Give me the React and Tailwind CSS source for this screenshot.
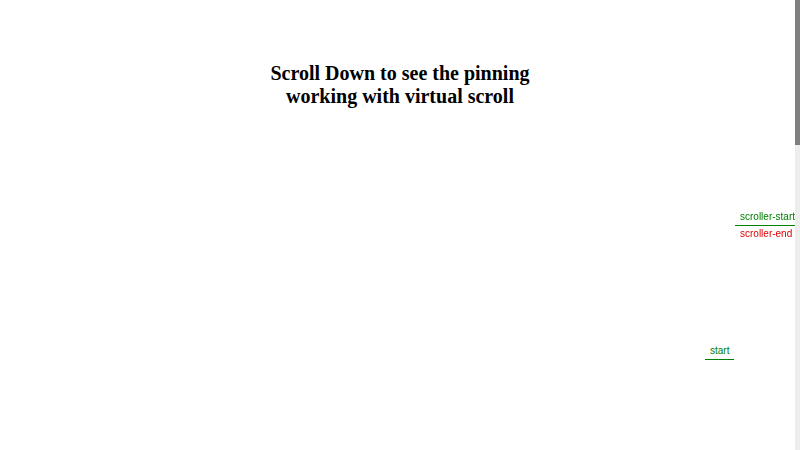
import React from 'react';

function Marker({ label, color, line = true, className = '' }) {
  return (
    <div
      className={`px-[5px] text-[10px] leading-[12px] whitespace-nowrap ${line ? 'border-b pt-[3px] pb-[2px]' : 'pt-[2px] pb-[3px]'} ${className}`}
      style={{ color, borderColor: color, fontFamily: '"Liberation Sans", Arial, sans-serif' }}
    >
      {label}
    </div>
  );
}

export default function App() {
  return (
    <div className="relative h-screen overflow-hidden bg-white">
      <div className="pt-[62px] text-center">
        <h1
          className="text-[20px] leading-[23px] font-bold text-black"
          style={{ fontFamily: '"Liberation Serif", "Times New Roman", serif' }}
        >
          Scroll Down to see the pinning
          <br />
          working with virtual scroll
        </h1>
      </div>

      {/* scroller markers, fixed to the viewport */}
      <div className="fixed right-0 top-[208px] flex flex-col items-start z-10">
        <Marker label="scroller-start" color="#008000" />
        <Marker label="scroller-end" color="#e00000" line={false} />
      </div>

      {/* trigger marker in the document */}
      <div className="absolute left-[705px] top-[342px]">
        <Marker label="start" color="#008000" />
      </div>

      {/* overlay scrollbar */}
      <div className="fixed right-0 top-0 h-screen w-[5px] bg-[#ededed] z-20">
        <div className="h-[145px] w-full bg-[#7f7f7f]" />
      </div>
    </div>
  );
}
